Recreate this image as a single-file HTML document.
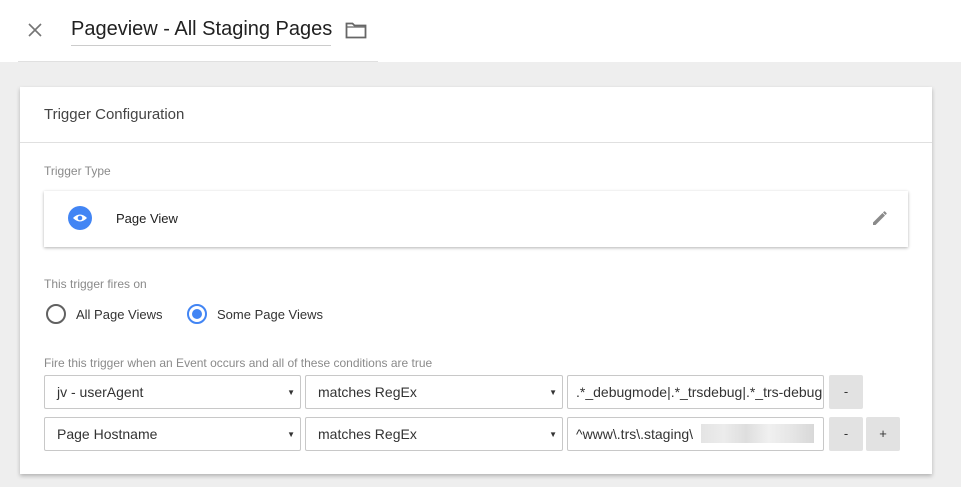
<!DOCTYPE html>
<html><head><style>
*{margin:0;padding:0;box-sizing:border-box}
body{width:961px;height:487px;background:#eeeeee;font-family:"Liberation Sans",sans-serif;position:relative;overflow:hidden;color:#212121}
.a{position:absolute}
.hdr{left:0;top:0;width:961px;height:62px;background:#fff}
.card{left:20px;top:87px;width:912px;height:387px;background:#fff;box-shadow:0 2px 4px rgba(0,0,0,.25)}
.lbl{font-size:12px;color:#8a8a8a}
.box{border:1px solid #c8c8c8;border-radius:2px;height:34px;font-size:14px;color:#333;padding-left:12px;line-height:32px;background:#fff}
.arr{position:absolute;right:5px;top:1px;font-size:8px;color:#333}
.btn{background:#e2e2e2;border-radius:2px;height:34px;width:34px;text-align:center;line-height:33px;font-size:13px;color:#333}
</style></head><body>
<div class="a hdr"></div>
<div class="a" style="left:18px;top:61px;width:360px;height:1px;background:#e0e0e0"></div>
<svg class="a" style="left:27px;top:22px" width="16" height="16"><path d="M2 2L14 14M14 2L2 14" stroke="#757575" stroke-width="1.6"/></svg>
<div class="a" style="left:71px;top:18px;font-size:20px;color:#212121">Pageview - All Staging Pages</div>
<div class="a" style="left:71px;top:45px;width:260px;height:1px;background:#ccc"></div>
<svg class="a" style="left:345px;top:21px" width="22" height="18"><path d="M1.5 2.5h6l2 2h11v12h-19z" fill="none" stroke="#666" stroke-width="1.8"/><path d="M1.5 6h19" stroke="#666" stroke-width="1.2"/></svg>
<div class="a card"></div>
<div class="a" style="left:44px;top:106px;font-size:15px;color:#444">Trigger Configuration</div>
<div class="a" style="left:20px;top:142px;width:912px;height:1px;background:#e0e0e0"></div>
<div class="a lbl" style="left:44px;top:164px">Trigger Type</div>
<div class="a" style="left:44px;top:191px;width:864px;height:56px;background:#fff;box-shadow:0 1px 3px rgba(0,0,0,.3)"></div>
<svg class="a" style="left:68px;top:206px" width="24" height="24"><circle cx="12" cy="12" r="12" fill="#4285f4"/><path d="M5 12Q12 5 19 12Q12 19 5 12z" fill="#fff"/><circle cx="12" cy="12" r="2.3" fill="#4285f4"/></svg>
<div class="a" style="left:116px;top:211px;font-size:13px;color:#212121">Page View</div>
<svg class="a" style="left:871px;top:209px" width="18" height="18"><path d="M2 13.5V16h2.5L14 6.5 11.5 4zM15.5 5a.7.7 0 000-1L14 2.5a.7.7 0 00-1 0L12 3.5 14.5 6z" fill="#8a8a8a"/></svg>
<div class="a lbl" style="left:44px;top:277px">This trigger fires on</div>
<div class="a" style="left:46px;top:304px;width:20px;height:20px;border:2px solid #616161;border-radius:50%"></div>
<div class="a" style="left:76px;top:307px;font-size:13px;color:#333">All Page Views</div>
<div class="a" style="left:187px;top:304px;width:20px;height:20px;border:2px solid #4285f4;border-radius:50%"><div style="margin:3px;width:10px;height:10px;border-radius:50%;background:#4285f4"></div></div>
<div class="a" style="left:217px;top:307px;font-size:13px;color:#333">Some Page Views</div>
<div class="a lbl" style="left:44px;top:356px">Fire this trigger when an Event occurs and all of these conditions are true</div>
<div class="a box" style="left:44px;top:375px;width:257px">jv - userAgent<span class="arr">▼</span></div>
<div class="a box" style="left:305px;top:375px;width:258px">matches RegEx<span class="arr">▼</span></div>
<div class="a box" style="left:567px;top:375px;width:257px;padding-left:8px;overflow:hidden;white-space:nowrap">.*_debugmode|.*_trsdebug|.*_trs-debug</div>
<div class="a btn" style="left:829px;top:375px">-</div>
<div class="a box" style="left:44px;top:417px;width:257px">Page Hostname<span class="arr">▼</span></div>
<div class="a box" style="left:305px;top:417px;width:258px">matches RegEx<span class="arr">▼</span></div>
<div class="a box" style="left:567px;top:417px;width:257px;padding-left:8px">^www\.trs\.staging\</div>
<div class="a" style="left:701px;top:424px;width:113px;height:19px;background:linear-gradient(90deg,#e4e4e4,#ececec,#dedede,#f0f0f0,#e6e6e6,#d8d8d8)"></div>
<div class="a btn" style="left:829px;top:417px">-</div>
<div class="a btn" style="left:866px;top:417px">+</div>
</body></html>
